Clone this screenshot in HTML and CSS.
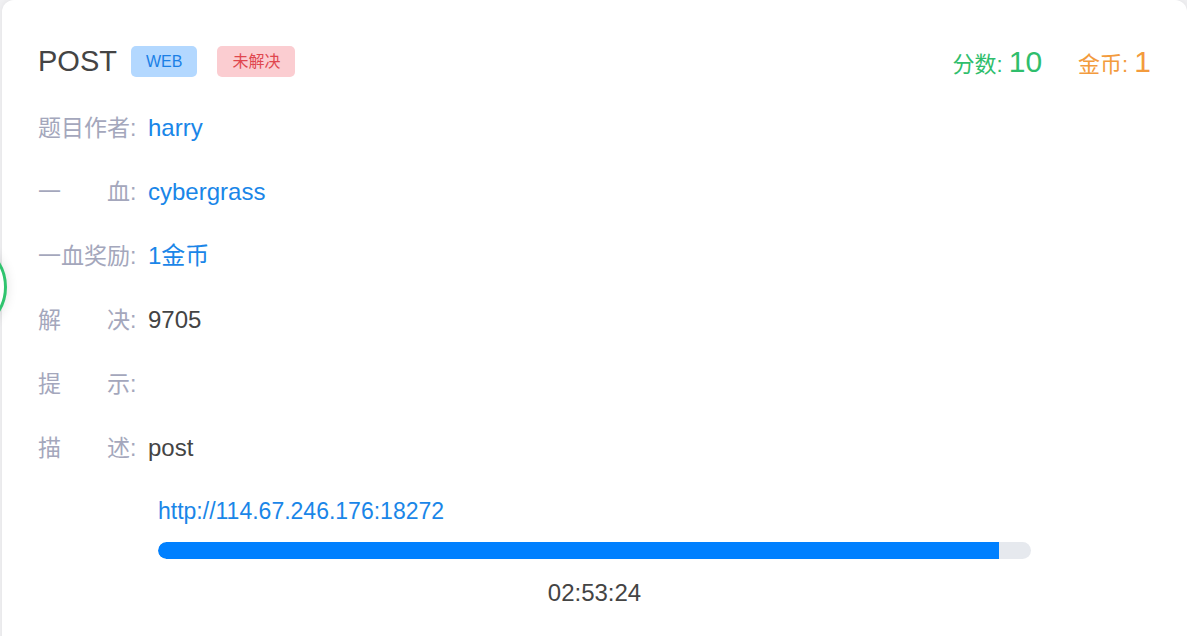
FILE: index.html
```html
<!DOCTYPE html>
<html lang="zh-CN">
<head>
  <meta charset="UTF-8">
  <meta name="viewport" content="width=device-width, initial-scale=1.0">
  <title>POST</title>
  <link rel="stylesheet" href="styles.css">
</head>
<body>

  <div class="pagina">
    <!-- tarjeta del reto -->
    <div class="tarjeta">
      <div class="cabecera">
        <div class="titulo">
          <h2>POST</h2>
          <span class="etiqueta web">WEB</span>
          <span class="etiqueta estado">未解决</span>
        </div>
        <div class="puntos">
          <span class="fraccion">分数: <b>10</b></span>
          <span class="moneda">金币: <b>1</b></span>
        </div>
      </div>

      <div class="fila"><span class="clave">题目作者:</span><span class="valor enlace">harry</span></div>
      <div class="fila"><span class="clave">一&emsp;&emsp;血:</span><span class="valor enlace">cybergrass</span></div>
      <div class="fila"><span class="clave">一血奖励:</span><span class="valor enlace">1金币</span></div>
      <div class="fila"><span class="clave">解&emsp;&emsp;决:</span><span class="valor">9705</span></div>
      <div class="fila"><span class="clave">提&emsp;&emsp;示:</span><span class="valor"></span></div>
      <div class="fila"><span class="clave">描&emsp;&emsp;述:</span><span class="valor">post</span></div>

      <div class="entorno">
        <a class="url" href="#">http://114.67.246.176:18272</a>
        <div class="barra"><div class="relleno" style="width: 96.3%"></div></div>
        <div class="tiempo">02:53:24</div>
      </div>
    </div>

    <div class="flotante"></div>
  </div>

</body>
</html>
```

FILE: styles.css
```css
body {
  font-family: 'Liberation Sans', 'Noto Sans CJK SC', sans-serif;
  background-color: #f0f0f2;
  margin: 0;
  color: #444;
}

.pagina {
  position: relative;
  padding-left: 2px;
  height: 636px;
  overflow: hidden;
}

.tarjeta {
  background-color: #fff;
  border-radius: 12px;
  padding: 30px 36px 0 36px;
  height: 660px;
  box-shadow: 0 0 6px rgba(0,0,0,0.06);
}

.cabecera {
  display: flex;
  justify-content: space-between;
  align-items: center;
  height: 62px;
  margin-bottom: 4px;
}

.titulo {
  display: flex;
  align-items: center;
}

.titulo h2 {
  margin: 0 14px 0 0;
  font-weight: normal;
  font-size: 29px;
  color: #444;
}

.etiqueta {
  display: inline-block;
  height: 31px;
  line-height: 31px;
  border-radius: 5px;
  font-size: 16px;
  padding: 0 15px;
  margin-right: 20px;
}

.etiqueta.web {
  background-color: #b3d8ff;
  color: #1a7fe6;
}

.etiqueta.estado {
  background-color: #fbcdd1;
  color: #e0474f;
}

.puntos {
  display: flex;
  align-items: baseline;
  gap: 36px;
  font-size: 22px;
  padding-top: 2px;
}

.puntos b {
  font-weight: normal;
  font-size: 30px;
}

.fraccion {
  color: #2fbe6c;
}

.moneda {
  color: #f39b3d;
}

.fila {
  display: flex;
  height: 64px;
  line-height: 64px;
}

.clave {
  width: 110px;
  font-size: 23px;
  color: #a4a7bc;
}

.valor {
  font-size: 24px;
  color: #444;
}

.enlace {
  color: #1a86e8;
}

.entorno {
  padding-left: 120px;
  width: 873px;
  padding-top: 16px;
}

.url {
  display: block;
  font-size: 23px;
  line-height: 30px;
  color: #1a86e8;
  text-decoration: none;
}

.barra {
  margin-top: 16px;
  height: 17px;
  border-radius: 9px;
  background-color: #e6e9ee;
  overflow: hidden;
}

.relleno {
  height: 100%;
  background-color: #0080ff;
  border-radius: 9px 0 0 9px;
}

.tiempo {
  text-align: center;
  font-size: 24px;
  margin-top: 20px;
  color: #444;
}

.flotante {
  position: absolute;
  left: -87px;
  top: 240px;
  width: 88px;
  height: 88px;
  border: 3px solid #2fc46e;
  border-radius: 50%;
  background-color: #fff;
  box-shadow: 0 0 12px rgba(0,0,0,0.12);
}
```
